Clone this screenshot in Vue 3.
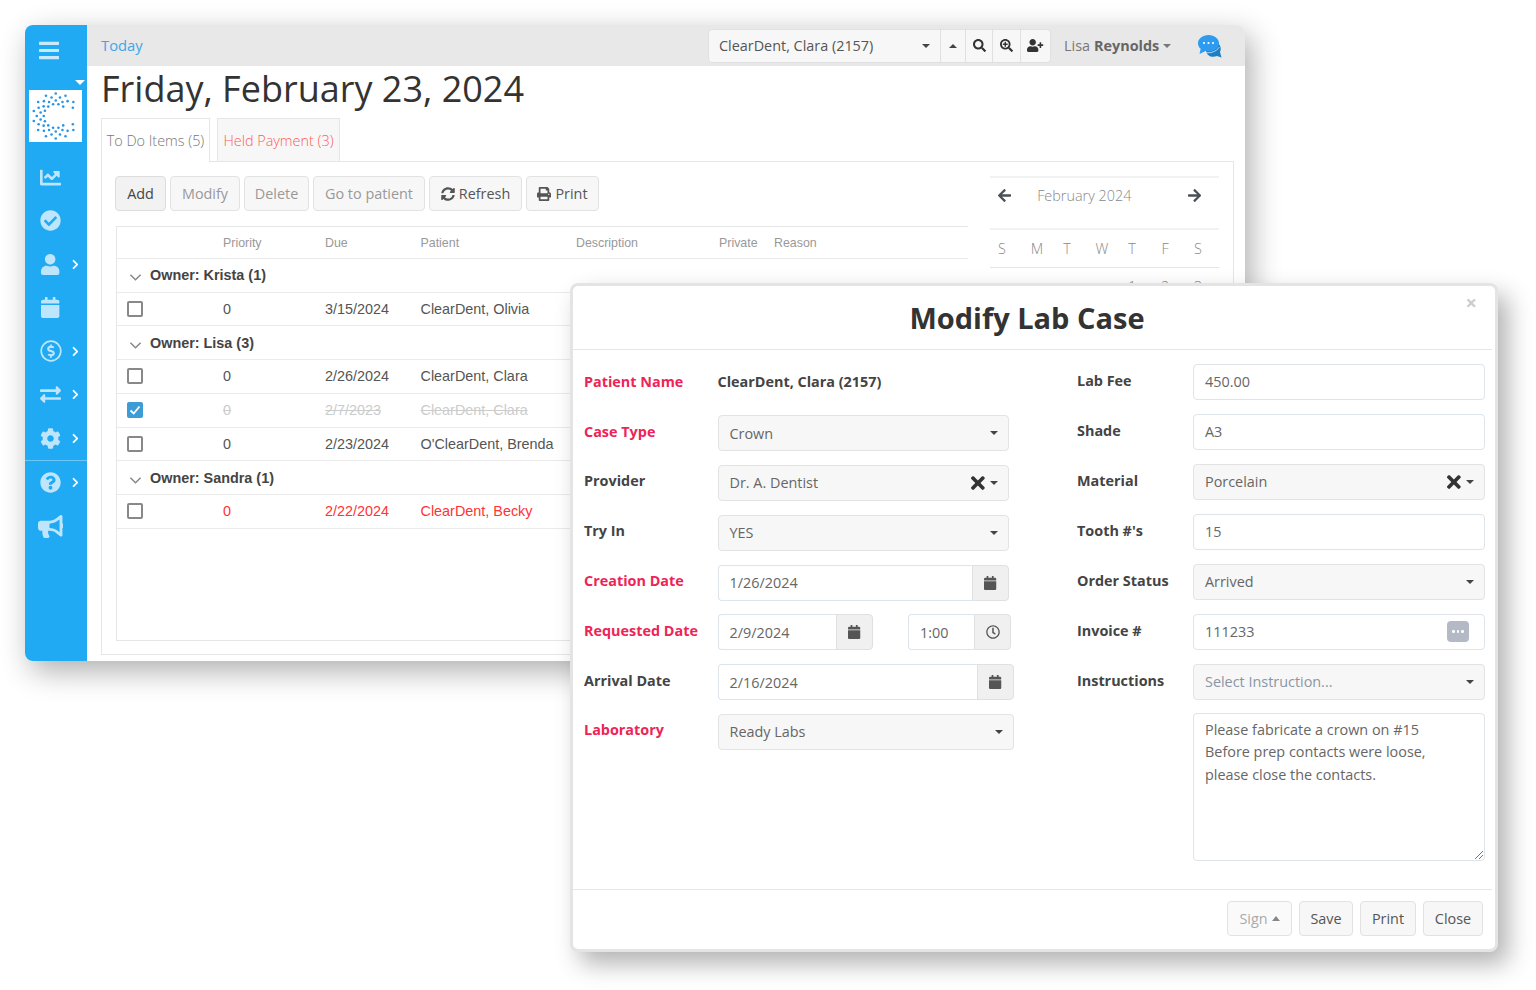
<script setup>
const I = {
  bars: { v: '0 0 448 512', d: 'M16 132h416c8.837 0 16-7.163 16-16V76c0-8.837-7.163-16-16-16H16C7.163 60 0 67.163 0 76v40c0 8.837 7.163 16 16 16zm0 160h416c8.837 0 16-7.163 16-16v-40c0-8.837-7.163-16-16-16H16c-8.837 0-16 7.163-16 16v40c0 8.837 7.163 16 16 16zm0 160h416c8.837 0 16-7.163 16-16v-40c0-8.837-7.163-16-16-16H16c-8.837 0-16 7.163-16 16v40c0 8.837 7.163 16 16 16z' },
  check: { v: '0 0 512 512', d: 'M504 256c0 136.967-111.033 248-248 248S8 392.967 8 256 119.033 8 256 8s248 111.033 248 248zM227.314 387.314l184-184c6.248-6.248 6.248-16.379 0-22.627l-22.627-22.627c-6.248-6.249-16.379-6.249-22.628 0L216 308.118l-70.059-70.059c-6.248-6.248-16.379-6.248-22.628 0l-22.627 22.627c-6.248 6.248-6.248 16.379 0 22.627l104 104c6.249 6.249 16.379 6.249 22.628.001z' },
  user: { v: '0 0 448 512', d: 'M224 256c70.7 0 128-57.3 128-128S294.7 0 224 0 96 57.3 96 128s57.3 128 128 128zm89.6 32h-16.7c-22.2 10.2-46.9 16-72.9 16s-50.6-5.8-72.9-16h-16.7C60.2 288 0 348.2 0 422.4V464c0 26.5 21.5 48 48 48h352c26.5 0 48-21.5 48-48v-41.6c0-74.2-60.2-134.4-134.4-134.4z' },
  cal: { v: '0 0 448 512', d: 'M12 192h424c6.6 0 12 5.4 12 12v260c0 26.5-21.5 48-48 48H48c-26.5 0-48-21.5-48-48V204c0-6.6 5.4-12 12-12zm436-44v-36c0-26.5-21.5-48-48-48h-48V12c0-6.6-5.4-12-12-12h-40c-6.6 0-12 5.4-12 12v52H160V12c0-6.6-5.4-12-12-12h-40c-6.6 0-12 5.4-12 12v52H48C21.5 64 0 85.5 0 112v36c0 6.6 5.4 12 12 12h424c6.6 0 12-5.4 12-12z' },
  exch: { v: '0 0 512 512', d: 'M0 168v-16c0-13.255 10.745-24 24-24h360V80c0-21.367 25.899-32.042 40.971-16.971l80 80c9.372 9.373 9.372 24.569 0 33.941l-80 80C409.956 271.982 384 261.456 384 240v-48H24c-13.255 0-24-10.745-24-24zm488 152H128v-48c0-21.314-25.862-32.08-40.971-16.971l-80 80c-9.372 9.373-9.372 24.569 0 33.941l80 80C102.057 463.997 128 453.437 128 432v-48h360c13.255 0 24-10.745 24-24v-16c0-13.255-10.745-24-24-24z' },
  cog: { v: '0 0 512 512', d: 'M487.4 315.7l-42.6-24.6c4.3-23.2 4.3-47 0-70.2l42.6-24.6c4.9-2.8 7.1-8.6 5.5-14-11.1-35.6-30-67.8-54.7-94.6-3.8-4.1-10-5.1-14.8-2.3L380.8 110c-17.9-15.4-38.5-27.3-60.8-35.1V25.8c0-5.6-3.9-10.5-9.4-11.7-36.7-8.2-74.3-7.8-109.2 0-5.5 1.2-9.4 6.1-9.4 11.7V75c-22.2 7.9-42.8 19.8-60.8 35.1L88.7 85.5c-4.9-2.8-11-1.9-14.8 2.3-24.7 26.7-43.6 58.9-54.7 94.6-1.7 5.4.6 11.2 5.5 14L67.3 221c-4.3 23.2-4.3 47 0 70.2l-42.6 24.6c-4.9 2.8-7.1 8.6-5.5 14 11.1 35.6 30 67.8 54.7 94.6 3.8 4.1 10 5.1 14.8 2.3l42.6-24.6c17.9 15.4 38.5 27.3 60.8 35.1v49.2c0 5.6 3.9 10.5 9.4 11.7 36.7 8.2 74.3 7.8 109.2 0 5.5-1.2 9.4-6.1 9.4-11.7v-49.2c22.2-7.9 42.8-19.8 60.8-35.1l42.6 24.6c4.9 2.8 11 1.9 14.8-2.3 24.7-26.7 43.6-58.9 54.7-94.6 1.5-5.5-.7-11.3-5.6-14.1zM256 336c-44.1 0-80-35.9-80-80s35.9-80 80-80 80 35.9 80 80-35.9 80-80 80z' },
  help: { v: '0 0 512 512', d: 'M504 256c0 136.997-111.043 248-248 248S8 392.997 8 256C8 119.083 119.043 8 256 8s248 111.083 248 248zM262.655 90c-54.497 0-89.255 22.957-116.549 63.758-3.536 5.286-2.353 12.415 2.715 16.258l34.699 26.31c5.205 3.947 12.621 3.008 16.665-2.122 17.864-22.658 30.113-35.797 57.303-35.797 20.429 0 45.698 13.148 45.698 32.958 0 14.976-12.363 22.667-32.534 33.976C247.128 238.528 216 254.941 216 296v4c0 6.627 5.373 12 12 12h56c6.627 0 12-5.373 12-12v-1.333c0-28.462 83.186-29.647 83.186-106.667 0-58.002-60.165-102-116.531-102zM256 338c-25.365 0-46 20.635-46 46 0 25.364 20.635 46 46 46s46-20.636 46-46c0-25.365-20.635-46-46-46z' },
  horn: { v: '0 0 576 512', d: 'M576 240c0-23.63-12.95-44.04-32-55.12V32.01C544 23.26 537.02 0 512 0c-7.12 0-14.19 2.38-19.98 7.02l-85.03 68.03C364.28 109.19 310.66 128 256 128H64c-35.35 0-64 28.65-64 64v96c0 35.35 28.65 64 64 64h33.7c-1.39 10.48-2.18 21.14-2.18 32 0 39.77 9.26 77.35 25.56 110.94 5.19 10.69 16.52 17.06 28.4 17.06h74.28c26.05 0 41.69-29.84 25.9-50.56-16.4-21.52-26.15-48.36-26.15-77.44 0-11.11 1.62-21.79 4.41-32H256c54.66 0 108.28 18.81 150.98 52.95l85.03 68.03a32.023 32.023 0 0 0 19.98 7.02c24.92 0 32-22.78 32-32V295.13C563.05 284.04 576 263.63 576 240zm-96 141.42l-33.05-26.44C392.95 311.78 325.12 288 256 288v-96c69.12 0 136.95-23.78 190.95-66.98L480 98.58v282.84z' },
  search: { v: '0 0 512 512', d: 'M505 442.7L405.3 343c-4.5-4.5-10.6-7-17-7H372c27.6-35.3 44-79.7 44-128C416 93.1 322.9 0 208 0S0 93.1 0 208s93.1 208 208 208c48.3 0 92.7-16.4 128-44v16.3c0 6.4 2.5 12.5 7 17l99.7 99.7c9.4 9.4 24.6 9.4 33.9 0l28.3-28.3c9.4-9.4 9.4-24.6.1-34zM208 336c-70.7 0-128-57.2-128-128 0-70.7 57.2-128 128-128 70.7 0 128 57.2 128 128 0 70.7-57.2 128-128 128z' },
  splus: { v: '0 0 512 512', d: 'M304 192v32c0 6.6-5.4 12-12 12h-56v56c0 6.6-5.4 12-12 12h-32c-6.6 0-12-5.4-12-12v-56h-56c-6.6 0-12-5.4-12-12v-32c0-6.6 5.4-12 12-12h56v-56c0-6.6 5.4-12 12-12h32c6.6 0 12 5.4 12 12v56h56c6.6 0 12 5.4 12 12zm201 284.7L476.7 505c-9.4 9.4-24.6 9.4-33.9 0L343 405.3c-4.5-4.5-7-10.6-7-17V372c-35.3 27.6-79.7 44-128 44C93.1 416 0 322.9 0 208S93.1 0 208 0s208 93.1 208 208c0 48.3-16.4 92.7-44 128h16.3c6.4 0 12.5 2.5 17 7l99.7 99.7c9.3 9.4 9.3 24.6 0 34zM344 208c0-75.2-60.8-136-136-136S72 132.8 72 208s60.8 136 136 136 136-60.8 136-136z' },
  uplus: { v: '0 0 640 512', d: 'M624 208h-64v-64c0-8.8-7.2-16-16-16h-32c-8.8 0-16 7.2-16 16v64h-64c-8.8 0-16 7.2-16 16v32c0 8.8 7.2 16 16 16h64v64c0 8.8 7.2 16 16 16h32c8.8 0 16-7.2 16-16v-64h64c8.8 0 16-7.2 16-16v-32c0-8.8-7.2-16-16-16zm-400 48c70.7 0 128-57.3 128-128S294.7 0 224 0 96 57.3 96 128s57.3 128 128 128zm89.6 32h-16.7c-22.2 10.2-46.9 16-72.9 16s-50.6-5.8-72.9-16h-16.7C60.2 288 0 348.2 0 422.4V464c0 26.5 21.5 48 48 48h352c26.5 0 48-21.5 48-48v-41.6c0-74.2-60.2-134.4-134.4-134.4z' },
  left: { v: '0 0 448 512', d: 'M257.5 445.1l-22.2 22.2c-9.4 9.4-24.6 9.4-33.9 0L7 273c-9.4-9.4-9.4-24.6 0-33.9L201.4 44.7c9.4-9.4 24.6-9.4 33.9 0l22.2 22.2c9.5 9.5 9.3 25-.4 34.3L136.6 216H424c13.3 0 24 10.7 24 24v32c0 13.3-10.7 24-24 24H136.6l120.5 114.8c9.8 9.3 10 24.8.4 34.3z' },
  right: { v: '0 0 448 512', d: 'M190.5 66.9l22.2-22.2c9.4-9.4 24.6-9.4 33.9 0L441 239c9.4 9.4 9.4 24.6 0 33.9L246.6 467.3c-9.4 9.4-24.6 9.4-33.9 0l-22.2-22.2c-9.5-9.5-9.3-25 .4-34.3L311.4 296H24c-13.3 0-24-10.7-24-24v-32c0-13.3 10.7-24 24-24h287.4L190.9 101.2c-9.8-9.3-10-24.8-.4-34.3z' },
  times: { v: '0 0 352 512', d: 'M242.72 256l100.07-100.07c12.28-12.28 12.28-32.19 0-44.48l-22.24-22.24c-12.28-12.28-32.19-12.28-44.48 0L176 189.28 75.93 89.21c-12.28-12.28-32.19-12.28-44.48 0L9.21 111.45c-12.28 12.28-12.28 32.19 0 44.48L109.28 256 9.21 356.07c-12.28 12.28-12.28 32.19 0 44.48l22.24 22.24c12.28 12.28 32.2 12.28 44.48 0L176 322.72l100.07 100.07c12.28 12.28 32.2 12.28 44.48 0l22.24-22.24c12.28-12.28 12.28-32.19 0-44.48L242.72 256z' },
  print: { v: '0 0 512 512', d: 'M448 192V77.25c0-8.49-3.37-16.62-9.37-22.63L393.37 9.37c-6-6-14.14-9.37-22.63-9.37H96C78.33 0 64 14.33 64 32v160c-35.35 0-64 28.65-64 64v112c0 8.84 7.16 16 16 16h48v96c0 17.67 14.33 32 32 32h320c17.67 0 32-14.33 32-32v-96h48c8.84 0 16-7.16 16-16V256c0-35.35-28.65-64-64-64zm-64 256H128v-96h256v96zm0-224H128V64h192v48c0 8.84 7.16 16 16 16h48v96zm48 72c-13.25 0-24-10.75-24-24 0-13.26 10.75-24 24-24s24 10.74 24 24c0 13.25-10.75 24-24 24z' },
  sync: { v: '0 0 512 512', d: 'M370.72 133.28C339.458 104.008 298.888 87.962 255.848 88c-77.458.068-144.328 53.178-162.791 126.85-1.344 5.363-6.122 9.15-11.651 9.15H24.103c-7.498 0-13.194-6.807-11.807-14.176C33.933 94.924 134.813 8 256 8c66.448 0 126.791 26.136 171.315 68.685L463.03 40.97C478.149 25.851 504 36.559 504 57.941V192c0 13.255-10.745 24-24 24H345.941c-21.382 0-32.09-25.851-16.971-40.971l41.75-41.749zM32 296h134.059c21.382 0 32.09 25.851 16.971 40.971l-41.75 41.75c31.262 29.273 71.835 45.319 114.876 45.28 77.418-.07 144.315-53.144 162.787-126.849 1.344-5.363 6.122-9.15 11.651-9.15h57.304c7.498 0 13.194 6.807 11.807 14.176C478.067 417.076 377.187 504 256 504c-66.448 0-126.791-26.136-171.315-68.685L48.97 471.03C33.851 486.149 8 475.441 8 454.059V320c0-13.255 10.745-24 24-24z' },
  chev: { v: '0 0 320 512', d: 'M285.476 272.971L91.132 467.314c-9.373 9.373-24.569 9.373-33.941 0l-22.667-22.667c-9.357-9.357-9.375-24.522-.04-33.901L188.505 256 34.484 101.255c-9.335-9.379-9.317-24.544.04-33.901l22.667-22.667c9.373-9.373 24.569-9.373 33.941 0L285.475 239.03c9.373 9.372 9.373 24.568.001 33.941z' },
  chart: { v: '0 0 512 512', d: 'M496 384H64V80c0-8.84-7.16-16-16-16H16C7.16 64 0 71.16 0 80v336c0 17.67 14.33 32 32 32h464c8.84 0 16-7.16 16-16v-32c0-8.84-7.16-16-16-16zM464 96H345.94c-21.38 0-32.09 25.85-16.97 40.97l32.4 32.4L288 242.75l-73.37-73.37c-12.5-12.5-32.76-12.5-45.25 0l-68.69 68.69c-6.25 6.25-6.25 16.38 0 22.63l22.62 22.62c6.25 6.25 16.38 6.25 22.63 0L192 237.25l73.37 73.37c12.5 12.5 32.76 12.5 45.25 0l96-96 32.4 32.4c15.12 15.12 40.97 4.41 40.97-16.97V112c.01-8.84-7.15-16-15.99-16z' },
  clock: { v: '0 0 512 512', d: 'M256 8C119 8 8 119 8 256s111 248 248 248 248-111 248-248S393 8 256 8zm0 448c-110.5 0-200-89.5-200-200S145.5 56 256 56s200 89.5 200 200-89.5 200-200 200zm61.8-104.4l-84.9-61.7c-3.1-2.3-4.9-5.9-4.9-9.7V116c0-6.6 5.4-12 12-12h32c6.6 0 12 5.4 12 12v141.7l66.8 48.6c5.4 3.9 6.5 11.4 2.6 16.8L334.6 349c-3.9 5.3-11.4 6.5-16.8 2.6z' },
  dollar: { v: '0 0 288 512', d: 'M209.2 233.4l-108-31.6C88.7 198.2 80 186.5 80 173.5c0-16.3 13.2-29.5 29.5-29.5h66.3c12.2 0 24.2 3.7 34.2 10.5 6.1 4.1 14.3 3.1 19.5-2l34.8-34c7.1-6.9 6.1-18.4-1.8-24.5C238 74.8 207.4 64.1 176 64V16c0-8.8-7.2-16-16-16h-32c-8.8 0-16 7.2-16 16v48h-2.5C45.8 64-5.4 118.7.5 183.6c4.2 46.1 39.4 83.6 83.8 96.6l102.5 30c12.5 3.7 21.2 15.3 21.2 28.3 0 16.3-13.2 29.5-29.5 29.5h-66.3C100 368 88 364.3 78 357.5c-6.1-4.1-14.3-3.1-19.5 2l-34.8 34c-7.1 6.9-6.1 18.4 1.8 24.5 24.5 19.2 55.1 29.9 86.5 30v48c0 8.8 7.2 16 16 16h32c8.8 0 16-7.2 16-16v-48.2c46.6-.9 90.3-28.6 105.7-72.7 21.5-61.6-14.6-124.8-72.5-141.7z' }
}

const navTop = [
  { icon: 'chart' }, { icon: 'check' }, { icon: 'user', more: true }, { icon: 'cal' },
  { icon: 'dollarc', more: true }, { icon: 'exch', more: true }, { icon: 'cog', more: true }
]

const logoDots = (() => {
  const dots = []
  const rings = [
    { r: 12, n: 14, off: 0, gap: 45 },
    { r: 15.5, n: 14, off: 12.86, gap: 45 },
    { r: 19, n: 14, off: 0, gap: 24 },
    { r: 22.5, n: 14, off: 12.86, gap: 14 }
  ]
  for (const ring of rings) {
    for (let i = 0; i < ring.n; i++) {
      const a = (i * 360) / ring.n + ring.off
      const n = a > 180 ? a - 360 : a
      if (Math.abs(n) < ring.gap) continue
      const t = (a * Math.PI) / 180
      dots.push({ x: 26.5 + ring.r * Math.cos(t), y: 26 + ring.r * Math.sin(t) })
    }
  }
  return dots
})()

const groups = [
  { owner: 'Krista (1)', rows: [{ p: '0', due: '3/15/2024', name: 'ClearDent, Olivia' }] },
  { owner: 'Lisa (3)', rows: [
    { p: '0', due: '2/26/2024', name: 'ClearDent, Clara' },
    { p: '0', due: '2/7/2023', name: 'ClearDent, Clara', done: true },
    { p: '0', due: '2/23/2024', name: "O'ClearDent, Brenda" }
  ] },
  { owner: 'Sandra (1)', rows: [{ p: '0', due: '2/22/2024', name: 'ClearDent, Becky', late: true }] }
]

const weekdays = ['S', 'M', 'T', 'W', 'T', 'F', 'S']
const firstDates = ['', '', '', '', '1', '2', '3']

const rightRows = [
  { label: 'Lab Fee', value: '450.00', kind: 'input' },
  { label: 'Shade', value: 'A3', kind: 'input' },
  { label: 'Material', value: 'Porcelain', kind: 'select', clear: true },
  { label: "Tooth #'s", value: '15', kind: 'input' },
  { label: 'Order Status', value: 'Arrived', kind: 'select' },
  { label: 'Invoice #', value: '111233', kind: 'input', more: true },
  { label: 'Instructions', value: 'Select Instruction...', kind: 'select', muted: true }
]
</script>

<template>
  <div class="canvas">
    <section class="win">
      <aside class="side">
        <div class="burger">
          <svg class="ic burger-ic" :viewBox="I.bars.v"><path :d="I.bars.d" /></svg>
        </div>
        <div class="logo-caret"><i class="tri-down white"></i></div>
        <div class="logo">
          <svg viewBox="0 0 52 52" class="logo-svg">
            <circle v-for="(d, i) in logoDots" :key="i" :cx="d.x" :cy="d.y" r="1.3" fill="#2a94e6" />
          </svg>
        </div>
        <nav class="nav">
          <div v-for="n in navTop" :key="n.icon" class="nav-item">
            <span class="nav-ic">
              <svg v-if="n.icon === 'dollarc'" class="svg21" viewBox="0 0 24 24">
                <circle cx="12" cy="12" r="10.7" fill="none" stroke="currentColor" stroke-width="1.8" />
                <svg x="7.5" y="4.5" width="9" height="15" :viewBox="I.dollar.v"><path :d="I.dollar.d" fill="currentColor" /></svg>
              </svg>
              <svg v-else class="ic h21" :viewBox="I[n.icon].v"><path :d="I[n.icon].d" /></svg>
            </span>
            <svg v-if="n.more" class="ic chev" :viewBox="I.chev.v"><path :d="I.chev.d" /></svg>
          </div>
        </nav>
        <nav class="nav nav-b">
          <div class="nav-item">
            <span class="nav-ic"><svg class="ic h21" :viewBox="I.help.v"><path :d="I.help.d" /></svg></span>
            <svg class="ic chev" :viewBox="I.chev.v"><path :d="I.chev.d" /></svg>
          </div>
          <div class="nav-item">
            <span class="nav-ic"><svg class="ic h21 horn" :viewBox="I.horn.v"><path :d="I.horn.d" /></svg></span>
          </div>
        </nav>
      </aside>

      <div class="main">
        <header class="top">
          <a class="today">Today</a>
          <div class="patient-box">
            <div class="pb-name"><span>ClearDent, Clara (2157)</span><i class="tri-down"></i></div>
            <div class="pb-btn w25"><i class="tri-up"></i></div>
            <div class="pb-btn w27"><svg class="ic s13" :viewBox="I.search.v"><path :d="I.search.d" /></svg></div>
            <div class="pb-btn w28"><svg class="ic s13" :viewBox="I.splus.v"><path :d="I.splus.d" /></svg></div>
            <div class="pb-btn w30"><svg class="ic s13" :viewBox="I.uplus.v"><path :d="I.uplus.d" /></svg></div>
          </div>
          <div class="who">Lisa <b>Reynolds</b><i class="tri-down grey"></i></div>
          <svg class="chat" viewBox="0 0 26 26">
            <path d="M10 18 C8 12 14 8 19 9 C24 10 26 15 24 19 L25.5 24.500 L21 23 C16 25 11 23 10 18Z" fill="#1b7fc4" />
            <path d="M12.500 2 C18.500 2 23 5.700 23 10.200 C23 14.700 18.500 18.400 12.500 18.400 C11.500 18.400 10.500 18.300 9.500 18 L3.500 21 L4.700 15.800 C2.900 14.300 2 12.300 2 10.200 C2 5.700 6.500 2 12.500 2Z" fill="#2c9bf0" />
            <path d="M9 19.500 C14 20.500 20 19 23.500 14" fill="none" stroke="#e8e8e8" stroke-width=".8" />
            <circle cx="8" cy="10" r="1.1" fill="#fff" /><circle cx="12.500" cy="10" r="1.1" fill="#fff" /><circle cx="17" cy="10" r="1.1" fill="#fff" />
          </svg>
        </header>

        <h1 class="title">Friday, February 23, 2024</h1>

        <div class="tabs">
          <div class="tab active">To Do Items (5)</div>
          <div class="tab held">Held Payment (3)</div>
        </div>

        <div class="panel">
          <div class="left">
            <div class="toolbar">
              <button class="btn strong w51">Add</button>
              <button class="btn dim w70">Modify</button>
              <button class="btn dim w65">Delete</button>
              <button class="btn dim w112">Go to patient</button>
              <button class="btn w93"><svg class="ic s14" :viewBox="I.sync.v"><path :d="I.sync.d" /></svg>Refresh</button>
              <button class="btn w73"><svg class="ic s14" :viewBox="I.print.v"><path :d="I.print.d" /></svg>Print</button>
            </div>
            <div class="table">
              <div class="tr thead">
                <span></span><span>Priority</span><span>Due</span><span>Patient</span><span>Description</span><span>Private</span><span>Reason</span>
              </div>
              <template v-for="g in groups" :key="g.owner">
                <div class="group">
                  <svg class="group-chev" viewBox="0 0 14 9"><path d="M1.500 1.500 L7 7 L12.500 1.500" fill="none" stroke="#888" stroke-width="1.600" /></svg>
                  <b>Owner: {{ g.owner }}</b>
                </div>
                <div v-for="(r, i) in g.rows" :key="i" class="tr row" :class="{ done: r.done, late: r.late }">
                  <span class="cb-cell">
                    <i class="cb" :class="{ on: r.done }">
                      <svg v-if="r.done" viewBox="0 0 16 16"><path d="M3.500 8.500 L6.700 11.500 L12.500 4.500" fill="none" stroke="#fff" stroke-width="1.800" /></svg>
                    </i>
                  </span>
                  <span class="txt">{{ r.p }}</span>
                  <span class="txt">{{ r.due }}</span>
                  <span class="txt">{{ r.name }}</span>
                </div>
              </template>
            </div>
          </div>

          <div class="cal">
            <div class="cal-head">
              <svg class="ic s14 dark" :viewBox="I.left.v"><path :d="I.left.d" /></svg>
              <span class="cal-month">February 2024</span>
              <svg class="ic s14 dark" :viewBox="I.right.v"><path :d="I.right.d" /></svg>
            </div>
            <div class="cal-row wd">
              <span v-for="(d, i) in weekdays" :key="i">{{ d }}</span>
            </div>
            <div class="cal-row dates">
              <span v-for="(d, i) in firstDates" :key="i">{{ d }}</span>
            </div>
          </div>
        </div>
      </div>
    </section>

    <section class="modal">
      <header class="m-head">
        <h2>Modify Lab Case</h2>
        <span class="m-x">×</span>
      </header>
      <div class="m-body">
        <div class="col-l">
          <div class="f-row">
            <label class="lbl req">Patient Name</label>
            <div class="static">ClearDent, Clara (2157)</div>
          </div>
          <div class="f-row">
            <label class="lbl req">Case Type</label>
            <div class="fld sel w291"><span>Crown</span><i class="tri-down"></i></div>
          </div>
          <div class="f-row">
            <label class="lbl">Provider</label>
            <div class="fld sel w291"><span>Dr. A. Dentist</span><svg class="ic x-ic" :viewBox="I.times.v"><path :d="I.times.d" /></svg><i class="tri-down"></i></div>
          </div>
          <div class="f-row">
            <label class="lbl">Try In</label>
            <div class="fld sel w291"><span>YES</span><i class="tri-down"></i></div>
          </div>
          <div class="f-row">
            <label class="lbl req">Creation Date</label>
            <div class="grp w291">
              <div class="fld inp grow">1/26/2024</div>
              <div class="addon"><svg class="ic s14" :viewBox="I.cal.v"><path :d="I.cal.d" /></svg></div>
            </div>
          </div>
          <div class="f-row">
            <label class="lbl req">Requested Date</label>
            <div class="grp w155">
              <div class="fld inp grow">2/9/2024</div>
              <div class="addon"><svg class="ic s14" :viewBox="I.cal.v"><path :d="I.cal.d" /></svg></div>
            </div>
            <div class="grp w103">
              <div class="fld inp grow">1:00</div>
              <div class="addon"><svg class="ic s14" :viewBox="I.clock.v"><path :d="I.clock.d" /></svg></div>
            </div>
          </div>
          <div class="f-row">
            <label class="lbl">Arrival Date</label>
            <div class="grp w296">
              <div class="fld inp grow">2/16/2024</div>
              <div class="addon"><svg class="ic s14" :viewBox="I.cal.v"><path :d="I.cal.d" /></svg></div>
            </div>
          </div>
          <div class="f-row">
            <label class="lbl req">Laboratory</label>
            <div class="fld sel w296"><span>Ready Labs</span><i class="tri-down"></i></div>
          </div>
        </div>

        <div class="col-r">
          <div v-for="r in rightRows" :key="r.label" class="f-row">
            <label class="lbl lbl-r">{{ r.label }}</label>
            <div class="fld w292" :class="[r.kind === 'select' ? 'sel' : 'inp', { muted: r.muted }]">
              <span>{{ r.value }}</span>
              <svg v-if="r.clear" class="ic x-ic" :viewBox="I.times.v"><path :d="I.times.d" /></svg>
              <i v-if="r.kind === 'select'" class="tri-down"></i>
              <span v-if="r.more" class="dots-btn"><i></i><i></i><i></i></span>
            </div>
          </div>
          <div class="area-row">
            <div class="area">
              <div>Please fabricate a crown on #15</div>
              <div>Before prep contacts were loose,</div>
              <div>please close the contacts.</div>
              <svg class="grip" viewBox="0 0 10 10"><path d="M1 9 L9 1 M5 9 L9 5" stroke="#777" stroke-width="1" fill="none" /></svg>
            </div>
          </div>
        </div>
      </div>
      <footer class="m-foot">
        <button class="btn f dim soft w65">Sign<i class="tri-up grey"></i></button>
        <button class="btn f w54">Save</button>
        <button class="btn f w56">Print</button>
        <button class="btn f w60">Close</button>
      </footer>
    </section>
  </div>
</template>

<style>
html, body { background: #fff; }
</style>

<style scoped>
.canvas { position: relative; width: 1536px; height: 990px; overflow: hidden; background: #fff; font-family: "Open Sans", sans-serif; color: #444; }
.ic { fill: currentColor; height: 1em; width: auto; display: block; flex: none; }

.win { position: absolute; left: 25px; top: 25px; width: 1220px; height: 636px; display: flex; background: #fff; border-radius: 8px 8px 0 8px; box-shadow: 6px 10px 30px rgba(0, 0, 0, .32); overflow: hidden; }

.side { width: 62px; flex: none; background: #1faaf3; color: #bde5fb; display: flex; flex-direction: column; }
.burger { height: 50px; padding-left: 14px; display: flex; align-items: center; color: #c8eafc; }
.burger-ic { height: 23px; }
.logo-caret { height: 15px; padding-right: 2px; display: flex; justify-content: flex-end; align-items: center; }
.logo { width: 52.500px; height: 52px; margin-left: 4px; background: #fff; flex: none; }
.logo-svg { width: 100%; height: 100%; display: block; }
.nav { display: flex; flex-direction: column; margin-top: 13.500px; }
.nav-b { margin-top: 0; border-top: 1px solid rgba(255, 255, 255, .35); }
.nav-item { height: 43.500px; display: flex; align-items: center; padding-left: 14.500px; flex: none; }
.nav-ic { width: 22px; display: flex; justify-content: center; flex: none; }
.h21 { height: 21px; }
.svg21 { width: 22px; height: 22px; display: block; }
.horn { height: 23px; }
.chev { height: 11px; color: #fff; margin-left: 10px; }

.main { flex: 1; min-width: 0; display: flex; flex-direction: column; padding: 0 11px 6px 14px; }
.top { height: 41px; margin: 0 -11px 0 -14px; padding: 0 23px 0 14px; background: #e8e8e8; display: flex; align-items: center; flex: none; }
.today { color: #3ea6e9; font-size: 14.800px; padding-bottom: 1px; }
.patient-box { margin-left: auto; width: 343px; height: 34px; display: flex; background: #f7f7f7; border: 1px solid #e0e0e0; border-radius: 4px; box-sizing: border-box; color: #333; }
.pb-name { flex: 1; display: flex; align-items: center; justify-content: space-between; padding: 0 10px; font-size: 14.400px; color: #555; }
.pb-btn { display: flex; align-items: center; justify-content: center; border-left: 1px solid #e0e0e0; box-sizing: border-box; }
.w25 { width: 25px; } .w27 { width: 27px; } .w28 { width: 28px; } .w30 { width: 30px; }
.s13 { height: 13px; } .s14 { height: 14px; }
.who { margin-left: 13px; width: 107px; flex: none; font-size: 14.400px; color: #777; display: flex; align-items: center; gap: 4px; }
.who b { font-weight: 700; color: #666; }
.chat { width: 26px; height: 26px; margin-left: 25px; flex: none; }

.tri-down, .tri-up { display: inline-block; width: 0; height: 0; border-left: 4px solid transparent; border-right: 4px solid transparent; flex: none; }
.tri-down { border-top: 4px solid #444; }
.tri-up { border-bottom: 4px solid #444; }
.tri-down.white { border-left-width: 5px; border-right-width: 5px; border-top: 5px solid #fff; }
.tri-down.grey { border-top-color: #777; border-left-width: 4.500px; border-right-width: 4.500px; border-top-width: 4.500px; }
.tri-up.grey { border-bottom-color: #888; border-left-width: 4.500px; border-right-width: 4.500px; border-bottom-width: 5px; }

.title { margin: 0; height: 52px; font-size: 36px; font-weight: 400; line-height: 45px; color: #333; flex: none; }
.tabs { display: flex; height: 44px; gap: 6px; flex: none; position: relative; margin-bottom: -1px; z-index: 1; }
.tab { box-sizing: border-box; border: 1px solid #e6e6e6; border-bottom: 0; height: 44px; display: flex; align-items: center; justify-content: center; font-size: 14.400px; font-weight: 300; }
.tab.active { width: 109px; background: #fff; color: #777; }
.tab.held { width: 123px; background: #f7f7f7; color: #fb5c5c; height: 43px; margin-left: 1px; }

.panel { flex: 1; min-height: 0; box-sizing: border-box; border: 1px solid #e6e6e6; display: flex; padding: 14px 0 13px 13px; }
.left { width: 853px; flex: none; display: flex; flex-direction: column; }
.toolbar { display: flex; gap: 4px; height: 35px; margin-bottom: 15px; flex: none; }
.btn { box-sizing: border-box; height: 35px; border: 1px solid #e2e2e2; border-radius: 4px; background: #f7f7f7; font-family: "Open Sans", sans-serif; font-size: 14.400px; color: #555; padding: 0; display: inline-flex; align-items: center; justify-content: center; gap: 4px; }
.btn.strong { background: #f2f2f2; border-color: #dcdcdc; color: #444; }
.btn.dim { color: #999; }
.btn.soft { background: #fafafa; color: #aaa; }
.w51 { width: 51px; } .w70 { width: 70px; } .w65 { width: 65px; } .w112 { width: 112px; } .w93 { width: 93px; } .w73 { width: 73px; }
.w54 { width: 54px; } .w56 { width: 56px; } .w60 { width: 60px; }

.table { flex: 1; margin-left: 1px; box-sizing: border-box; border: 1px solid #e6e6e6; border-right: 0; font-family: "Liberation Sans", Arial, sans-serif; }
.tr { display: grid; grid-template-columns: 106px 102px 95.500px 155.500px 143px 55px 1fr; align-items: center; box-sizing: border-box; border-bottom: 1px solid #eaeaea; }
.thead { height: 31.800px; padding-top: 1px; font-size: 12.400px; color: #999; }
.row { height: 33.750px; font-size: 14.400px; color: #555; }
.row .cb-cell { display: flex; padding-left: 10px; }
.cb { box-sizing: border-box; width: 16px; height: 16px; border: 2px solid #888; border-radius: 2px; background: #fff; display: block; }
.cb.on { background: #3d9bd6; border-color: #3d9bd6; border-width: 0; }
.cb.on svg { display: block; width: 16px; height: 16px; }
.done .txt { color: #ccc; text-decoration: line-through; }
.late .txt { color: #f33; }
.group { height: 33.750px; box-sizing: border-box; border-bottom: 1px solid #eaeaea; display: flex; align-items: center; padding-left: 12px; font-size: 14.400px; color: #444; }
.group b { font-weight: 700; }
.group-chev { width: 13px; height: 9px; margin: 5px 8px 0 0; flex: none; }

.cal { width: 229px; margin-left: 22px; flex: none; color: #888; }
.cal-head { box-sizing: border-box; height: 54px; border-top: 2px solid #f2f2f2; border-bottom: 2px solid #f2f2f2; display: flex; align-items: center; padding: 0 18px 16px 8px; color: #444; }
.cal-head .dark { color: #4a5058; height: 15px; }
.cal-month { flex: 1; font-size: 14.400px; color: #888; font-weight: 300; padding-left: 26px; }
.cal-row { display: flex; padding-left: 5px; font-size: 14.400px; font-weight: 300; }
.cal-row span { width: 14px; text-align: center; flex: none; }
.cal-row span:nth-child(2), .cal-row span:nth-child(4) { margin-left: 21px; }
.cal-row span:nth-child(3), .cal-row span:nth-child(5) { margin-left: 16px; }
.cal-row span:nth-child(6), .cal-row span:nth-child(7) { margin-left: 19px; }
.wd { height: 38px; align-items: center; box-sizing: border-box; border-bottom: 1px solid #e6e6e6; }
.dates { height: 36px; align-items: center; }

.modal { position: absolute; left: 570px; top: 283px; width: 928px; height: 669px; box-sizing: border-box; background: #fff; border: 3px solid #e4e4e4; border-radius: 8px; box-shadow: 10px 12px 24px rgba(0, 0, 0, .3); display: flex; flex-direction: column; }
.m-head { position: relative; height: 64px; margin-right: 3px; flex: none; box-sizing: border-box; border-bottom: 1px solid #e6e6e6; display: flex; align-items: center; justify-content: center; }
.m-head h2 { margin: 0; font-size: 29px; font-weight: 700; color: #333; padding-right: 11px; }
.m-x { position: absolute; right: 15px; top: 5px; font-size: 20px; line-height: 24px; color: #ccc; font-weight: 700; }
.m-body { flex: 1; min-height: 0; display: grid; grid-template-columns: 493px 1fr; padding-left: 11px; }
.m-foot { height: 60px; margin-right: 3px; flex: none; box-sizing: border-box; border-top: 1px solid #e6e6e6; display: flex; justify-content: flex-end; align-items: center; gap: 7px; padding: 0 9px 2px 0; }
.btn.f { height: 35px; }

.col-l { padding-top: 8.500px; }
.col-r { padding-top: 7px; }
.col-r .f-row { height: 49.950px; }
.f-row { height: 49.800px; display: flex; align-items: center; }
.lbl { width: 133.500px; flex: none; font-size: 14.400px; font-weight: 700; color: #444; padding-bottom: 4px; }
.lbl-r { width: 116px; padding-bottom: 2px; }
.req { color: #ee2456; }
.static { font-size: 14.400px; font-weight: 700; color: #444; padding-bottom: 4px; }

.fld { box-sizing: border-box; height: 36px; padding: 0 10px 0 11px; font-size: 14.400px; color: #666; border-radius: 4px; display: flex; align-items: center; }
.fld span:first-child { flex: 1; }
.sel { background: #f7f7f7; border: 1px solid #e3e3e3; }
.inp { background: #fff; border: 1px solid #dde4ea; }
.muted { color: #8a96a3; }
.w291 { width: 291.500px; } .w292 { width: 292px; } .w296 { width: 296.500px; } .w155 { width: 155.500px; } .w103 { width: 103px; margin-left: 35px; }
.x-ic { height: 20px; color: #333; margin-right: 5px; }
.grp { display: flex; height: 36px; flex: none; }
.grow { flex: 1; min-width: 0; border-radius: 4px 0 0 4px; border-right: 0; }
.addon { width: 37px; box-sizing: border-box; flex: none; background: #f0f0f0; border: 1px solid #e0e0e0; border-radius: 0 4px 4px 0; display: flex; align-items: center; justify-content: center; color: #555; }
.dots-btn { width: 22px; height: 21px; flex: none; border-radius: 4px; background: #b3bac6; display: flex; align-items: center; justify-content: center; gap: 2px; margin-right: 5px; }
.dots-btn i { width: 2.500px; height: 2.500px; border-radius: 50%; background: #fff; display: block; }

.area-row { padding: 6px 0 0 116px; }
.area { position: relative; box-sizing: border-box; width: 292px; height: 148px; border: 1px solid #dde4ea; border-radius: 4px; padding: 5px 11px; font-size: 14.400px; line-height: 22.600px; color: #666; }
.grip { position: absolute; right: 0; bottom: 0; width: 10px; height: 10px; }
</style>
